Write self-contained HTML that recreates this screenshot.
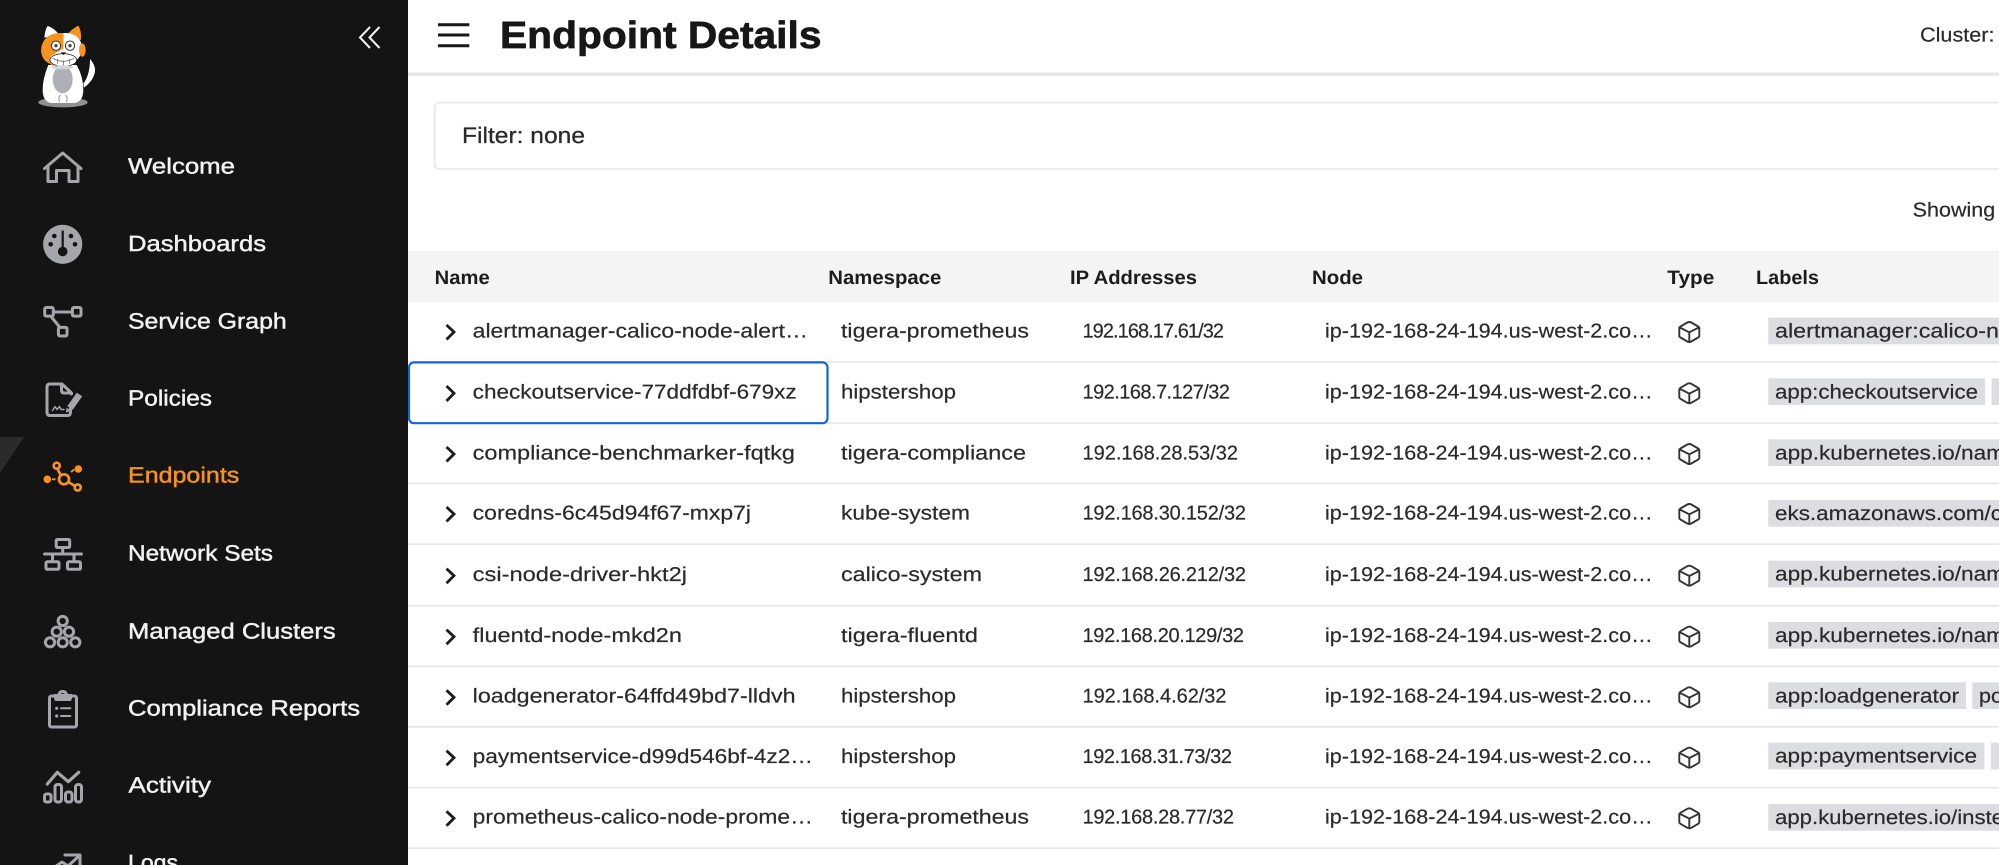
<!DOCTYPE html>
<html><head><meta charset="utf-8"><title>Endpoint Details</title>
<style>
html,body{margin:0;padding:0;background:#fff;width:1999px;height:865px;overflow:hidden}
svg{display:block;filter:blur(.35px)}
text{font-family:"Liberation Sans",sans-serif;text-rendering:geometricPrecision;white-space:pre}
.nav{font-size:22px;fill:#f2f2f2;stroke:#f2f2f2;stroke-width:.45px}
.th{font-size:19.5px;font-weight:bold;fill:#1c1c1c}
.td{font-size:20px;fill:#2a2a2a;stroke:#2a2a2a;stroke-width:.2px}
.ic{fill:none;stroke:#a4a6ab;stroke-width:3;stroke-linecap:round;stroke-linejoin:round}
.chev{fill:none;stroke:#1c1c1c;stroke-width:2.8}
.cube{fill:none;stroke:#333;stroke-width:1.9;stroke-linejoin:round}
.chip{fill:#dcdde0}
.sep{fill:#e5e5ea}
</style></head>
<body>
<svg width="1999" height="865" viewBox="0 0 1999 865" xmlns="http://www.w3.org/2000/svg">
<defs>
<path id="cb" class="cube" d="M-10-4Q-10-5-8-6L-2-9.5Q0-10.5 2-9.5L8-6Q10-5 10-4V4Q10 5 8 6L2 9.5Q0 10.5-2 9.5L-8 6Q-10 5-10 4ZM-9.5-4.5L0 0.3L9.5-4.5M0 0.3V10"/>
</defs>
<rect width="1999" height="865" fill="#fff"/>

<!-- Header -->
<rect x="408" y="72.5" width="1591" height="3.5" class="sep"/>
<g stroke="#171717" stroke-width="3"><path d="M438 24.7H469.3M438 35H469.3M438 45.7H469.3"/></g>
<text x="500" y="48" font-size="38" font-weight="bold" fill="#171717" stroke="#171717" stroke-width=".7" textLength="321.5" lengthAdjust="spacingAndGlyphs">Endpoint Details</text>
<text x="1920" y="41.7" font-size="20" fill="#2a2a2a" stroke="#2a2a2a" stroke-width=".2" textLength="74.5" lengthAdjust="spacingAndGlyphs">Cluster:</text>

<!-- Filter -->
<rect x="434.7" y="102.5" width="1700" height="66.5" rx="5" fill="#fff" stroke="#e5e5ea" stroke-width="1.6"/>
<text x="462" y="143" font-size="22.5" fill="#2a2a2a" stroke="#2a2a2a" stroke-width=".3" textLength="123" lengthAdjust="spacingAndGlyphs">Filter: none</text>
<text x="1912.7" y="216.7" font-size="20" fill="#2a2a2a" stroke="#2a2a2a" stroke-width=".2" textLength="82.5" lengthAdjust="spacingAndGlyphs">Showing</text>

<!-- Table head -->
<rect x="408" y="251" width="1591" height="51" fill="#f4f4f4"/>
<text class="th" x="434.7" y="284" textLength="55" lengthAdjust="spacingAndGlyphs">Name</text>
<text class="th" x="828.3" y="284" textLength="113" lengthAdjust="spacingAndGlyphs">Namespace</text>
<text class="th" x="1070" y="284" textLength="127" lengthAdjust="spacingAndGlyphs">IP Addresses</text>
<text class="th" x="1312" y="284" textLength="51" lengthAdjust="spacingAndGlyphs">Node</text>
<text class="th" x="1667.3" y="284" textLength="47" lengthAdjust="spacingAndGlyphs">Type</text>
<text class="th" x="1756" y="284" textLength="63" lengthAdjust="spacingAndGlyphs">Labels</text>

<!-- Row separators -->
<rect x="408" y="361" width="1591" height="1.6" class="sep"/>
<rect x="408" y="422.3" width="1591" height="1.6" class="sep"/>
<rect x="408" y="482.6" width="1591" height="1.6" class="sep"/>
<rect x="408" y="543.4" width="1591" height="1.6" class="sep"/>
<rect x="408" y="605" width="1591" height="1.6" class="sep"/>
<rect x="408" y="665.5" width="1591" height="1.6" class="sep"/>
<rect x="408" y="726" width="1591" height="1.6" class="sep"/>
<rect x="408" y="787" width="1591" height="1.6" class="sep"/>
<rect x="408" y="847.5" width="1591" height="1.6" class="sep"/>

<!-- Row 1 -->
<path class="chev" d="M446.5 325L454 332L446.5 339.5"/>
<text class="td" x="472.7" y="337.7" textLength="335.3" lengthAdjust="spacingAndGlyphs">alertmanager-calico-node-alert…</text>
<text class="td" x="841" y="337.7" textLength="188" lengthAdjust="spacingAndGlyphs">tigera-prometheus</text>
<text class="td" x="1082.5" y="337.7" textLength="141.5" lengthAdjust="spacing">192.168.17.61/32</text>
<text class="td" x="1325" y="337.7" textLength="327.7" lengthAdjust="spacingAndGlyphs">ip-192-168-24-194.us-west-2.co…</text>
<use href="#cb" transform="translate(1689.3 332)"/>
<rect class="chip" x="1768.3" y="317.7" width="240" height="26.7"/>
<text class="td" x="1775" y="337.7" textLength="224" lengthAdjust="spacingAndGlyphs">alertmanager:calico-n</text>

<!-- Row 2 -->
<path class="chev" d="M446.5 386L454 393.3L446.5 401"/>
<text class="td" x="472.7" y="398.3" textLength="324" lengthAdjust="spacingAndGlyphs">checkoutservice-77ddfdbf-679xz</text>
<text class="td" x="841" y="398.3" textLength="115" lengthAdjust="spacingAndGlyphs">hipstershop</text>
<text class="td" x="1082.5" y="398.3" textLength="147.5" lengthAdjust="spacing">192.168.7.127/32</text>
<text class="td" x="1325" y="398.3" textLength="327.7" lengthAdjust="spacingAndGlyphs">ip-192-168-24-194.us-west-2.co…</text>
<use href="#cb" transform="translate(1689.3 393.3)"/>
<rect class="chip" x="1768.3" y="378.3" width="216.7" height="26.7"/>
<rect class="chip" x="1991.7" y="378.3" width="20" height="26.7"/>
<text class="td" x="1775" y="398.3" textLength="203" lengthAdjust="spacingAndGlyphs">app:checkoutservice</text>

<!-- Focus -->
<rect x="409" y="362.4" width="418.5" height="60.8" rx="5" fill="none" stroke="#1464d8" stroke-width="2.2"/>

<!-- Row 3 -->
<path class="chev" d="M446.5 447L454 454L446.5 461.5"/>
<text class="td" x="472.7" y="459.3" textLength="322.3" lengthAdjust="spacingAndGlyphs">compliance-benchmarker-fqtkg</text>
<text class="td" x="841" y="459.3" textLength="185" lengthAdjust="spacingAndGlyphs">tigera-compliance</text>
<text class="td" x="1082.5" y="459.3" textLength="155.5" lengthAdjust="spacing">192.168.28.53/32</text>
<text class="td" x="1325" y="459.3" textLength="327.7" lengthAdjust="spacingAndGlyphs">ip-192-168-24-194.us-west-2.co…</text>
<use href="#cb" transform="translate(1689.3 454)"/>
<rect class="chip" x="1768.3" y="439.3" width="240" height="26.7"/>
<text class="td" x="1775" y="459.3" textLength="230" lengthAdjust="spacingAndGlyphs">app.kubernetes.io/nam</text>

<!-- Row 4 -->
<path class="chev" d="M446.5 507L454 514L446.5 521.5"/>
<text class="td" x="472.7" y="519.5" textLength="278.3" lengthAdjust="spacingAndGlyphs">coredns-6c45d94f67-mxp7j</text>
<text class="td" x="841" y="519.5" textLength="129" lengthAdjust="spacingAndGlyphs">kube-system</text>
<text class="td" x="1082.5" y="519.5" textLength="163.5" lengthAdjust="spacing">192.168.30.152/32</text>
<text class="td" x="1325" y="519.5" textLength="327.7" lengthAdjust="spacingAndGlyphs">ip-192-168-24-194.us-west-2.co…</text>
<use href="#cb" transform="translate(1689.3 514)"/>
<rect class="chip" x="1768.3" y="500" width="240" height="26.7"/>
<text class="td" x="1775" y="520" textLength="227" lengthAdjust="spacingAndGlyphs">eks.amazonaws.com/c</text>

<!-- Row 5 -->
<path class="chev" d="M446.5 568.7L454 575.7L446.5 583.2"/>
<text class="td" x="472.7" y="581" textLength="214.3" lengthAdjust="spacingAndGlyphs">csi-node-driver-hkt2j</text>
<text class="td" x="841" y="581" textLength="141" lengthAdjust="spacingAndGlyphs">calico-system</text>
<text class="td" x="1082.5" y="581" textLength="163.5" lengthAdjust="spacing">192.168.26.212/32</text>
<text class="td" x="1325" y="581" textLength="327.7" lengthAdjust="spacingAndGlyphs">ip-192-168-24-194.us-west-2.co…</text>
<use href="#cb" transform="translate(1689.3 575.7)"/>
<rect class="chip" x="1768.3" y="560.7" width="240" height="26.7"/>
<text class="td" x="1775" y="580.7" textLength="230" lengthAdjust="spacingAndGlyphs">app.kubernetes.io/nam</text>

<!-- Row 6 -->
<path class="chev" d="M446.5 629.7L454 636.7L446.5 644.2"/>
<text class="td" x="472.7" y="642" textLength="209.3" lengthAdjust="spacingAndGlyphs">fluentd-node-mkd2n</text>
<text class="td" x="841" y="642" textLength="137" lengthAdjust="spacingAndGlyphs">tigera-fluentd</text>
<text class="td" x="1082.5" y="642" textLength="161.5" lengthAdjust="spacing">192.168.20.129/32</text>
<text class="td" x="1325" y="642" textLength="327.7" lengthAdjust="spacingAndGlyphs">ip-192-168-24-194.us-west-2.co…</text>
<use href="#cb" transform="translate(1689.3 636.7)"/>
<rect class="chip" x="1768.3" y="622" width="240" height="26.7"/>
<text class="td" x="1775" y="642" textLength="230" lengthAdjust="spacingAndGlyphs">app.kubernetes.io/nam</text>

<!-- Row 7 -->
<path class="chev" d="M446.5 690.3L454 697.3L446.5 704.8"/>
<text class="td" x="472.7" y="702.5" textLength="322.9" lengthAdjust="spacingAndGlyphs">loadgenerator-64ffd49bd7-lldvh</text>
<text class="td" x="841" y="702.5" textLength="115" lengthAdjust="spacingAndGlyphs">hipstershop</text>
<text class="td" x="1082.5" y="702.5" textLength="144" lengthAdjust="spacing">192.168.4.62/32</text>
<text class="td" x="1325" y="702.5" textLength="327.7" lengthAdjust="spacingAndGlyphs">ip-192-168-24-194.us-west-2.co…</text>
<use href="#cb" transform="translate(1689.3 697.3)"/>
<rect class="chip" x="1768.3" y="682.3" width="197.7" height="26.7"/>
<rect class="chip" x="1972.3" y="682.3" width="40" height="26.7"/>
<text class="td" x="1775" y="702.3" textLength="184" lengthAdjust="spacingAndGlyphs">app:loadgenerator</text>
<text class="td" x="1979" y="702.3" textLength="24" lengthAdjust="spacingAndGlyphs">po</text>

<!-- Row 8 -->
<path class="chev" d="M446.5 750.7L454 757.7L446.5 765.2"/>
<text class="td" x="472.7" y="763" textLength="340.3" lengthAdjust="spacingAndGlyphs">paymentservice-d99d546bf-4z2…</text>
<text class="td" x="841" y="763" textLength="115" lengthAdjust="spacingAndGlyphs">hipstershop</text>
<text class="td" x="1082.5" y="763" textLength="149.5" lengthAdjust="spacing">192.168.31.73/32</text>
<text class="td" x="1325" y="763" textLength="327.7" lengthAdjust="spacingAndGlyphs">ip-192-168-24-194.us-west-2.co…</text>
<use href="#cb" transform="translate(1689.3 757.7)"/>
<rect class="chip" x="1768.3" y="742.7" width="216" height="26.7"/>
<rect class="chip" x="1991" y="742.7" width="20" height="26.7"/>
<text class="td" x="1775" y="762.7" textLength="202" lengthAdjust="spacingAndGlyphs">app:paymentservice</text>

<!-- Row 9 -->
<path class="chev" d="M446.5 811.3L454 818.3L446.5 825.8"/>
<text class="td" x="472.7" y="823.7" textLength="340.3" lengthAdjust="spacingAndGlyphs">prometheus-calico-node-prome…</text>
<text class="td" x="841" y="823.7" textLength="188" lengthAdjust="spacingAndGlyphs">tigera-prometheus</text>
<text class="td" x="1082.5" y="823.7" textLength="151.5" lengthAdjust="spacing">192.168.28.77/32</text>
<text class="td" x="1325" y="823.7" textLength="327.7" lengthAdjust="spacingAndGlyphs">ip-192-168-24-194.us-west-2.co…</text>
<use href="#cb" transform="translate(1689.3 818.3)"/>
<rect class="chip" x="1768.3" y="804" width="240" height="26.7"/>
<text class="td" x="1775" y="824" textLength="229" lengthAdjust="spacingAndGlyphs">app.kubernetes.io/inste</text>

<!-- Sidebar -->
<rect x="0" y="0" width="408" height="865" fill="#141414"/>
<path d="M0 437H24L0 473Z" fill="#2b2b2b"/>
<path d="M370 27L360 37.5L370 48M379.5 27L369.5 37.5L379.5 48" fill="none" stroke="#f4f4f4" stroke-width="2"/>

<!-- Cat logo -->
<g transform="translate(30 15) scale(.3333)">
  <ellipse cx="99" cy="262" rx="74" ry="15" fill="#8f9094"/>
  <path d="M180 132Q197 150 195 170Q190 198 162 218L160 206Q180 180 180 132Z" fill="#fff"/>
  <path d="M55 150Q38 190 38 225Q38 258 62 264H135Q160 258 160 225Q160 185 140 150Z" fill="#fff"/>
  <ellipse cx="98" cy="193" rx="30" ry="42" fill="#adb0b6"/>
  <path d="M88 262Q84 245 92 240M110 262Q114 245 106 240" stroke="#8f9094" stroke-width="3" fill="none"/>
  <path d="M43 68Q46 40 53 33Q72 38 88 60Z" fill="#fff"/>
  <path d="M110 60Q128 40 145 32Q155 48 153 75Z" fill="#f7931e"/>
  <path d="M100 54Q55 52 40 80Q24 112 46 138L72 155L60 125L100 100Z" fill="#f7931e"/>
  <path d="M100 54Q140 52 153 82Q160 110 145 130L120 150H70L60 125L100 100Z" fill="#fff"/>
  <ellipse cx="157" cy="105" rx="10" ry="20" fill="#f7931e"/>
  <ellipse cx="100" cy="135" rx="40" ry="19" fill="#fff" stroke="#333" stroke-width="2.5"/>
  <path d="M68 130Q100 148 132 130M82 132V146M100 136V153M118 132V146" stroke="#555" stroke-width="2" fill="none"/>
  <path d="M92 112H108L100 120Z" fill="#111"/>
  <circle cx="78" cy="92" r="14" fill="#fff" stroke="#333" stroke-width="3"/>
  <circle cx="120" cy="92" r="14" fill="#fff" stroke="#333" stroke-width="3"/>
  <circle cx="78" cy="92" r="5" fill="#444"/>
  <circle cx="120" cy="92" r="5" fill="#444"/>
  <ellipse cx="97" cy="157" rx="32" ry="6" fill="#d4d5d9"/>
</g>

<!-- Home -->
<path class="ic" d="M44.5 168.5L62.7 153L81 168.5M48 166V181.5H56.5V170.5H69V181.5H78V166"/>
<text class="nav" x="128" y="173.3" textLength="107" lengthAdjust="spacingAndGlyphs">Welcome</text>

<!-- Dashboards -->
<circle cx="62.7" cy="244.3" r="19.6" fill="#a4a6ab"/>
<path d="M62.7 230.5V250" stroke="#141414" stroke-width="2.2"/>
<circle cx="62.7" cy="251.5" r="4.8" fill="#141414"/>
<g fill="#141414"><circle cx="54.3" cy="236" r="2.3"/><circle cx="71" cy="236" r="2.3"/><circle cx="50.7" cy="244.3" r="2.3"/><circle cx="75" cy="244.3" r="2.3"/></g>
<text class="nav" x="128" y="251" textLength="138" lengthAdjust="spacingAndGlyphs">Dashboards</text>

<!-- Service Graph -->
<g class="ic"><rect x="44.7" y="307.5" width="8.6" height="8.6" rx="1.5"/><rect x="72.4" y="307.5" width="8.6" height="8.6" rx="1.5"/><rect x="58.4" y="327.4" width="8.6" height="8.6" rx="1.5"/><path d="M53.5 312H72M51 316.5L60 327.5"/></g>
<text class="nav" x="128" y="328.3" textLength="158.7" lengthAdjust="spacingAndGlyphs">Service Graph</text>

<!-- Policies -->
<g class="ic"><path d="M70.5 406V412Q70.5 415.5 67.5 415.5H50Q47 415.5 47 412.5V387Q47 384 50 384H62L71.5 393V394"/><path d="M61.5 384V390Q61.5 393 64 393H71"/><path d="M52.5 410.5L55 406.5L57 409.5L59.5 406.5L61 409.5H64" stroke-width="1.4"/></g>
<path d="M79.5 394.5L70 408" stroke="#a4a6ab" stroke-width="6.5"/>
<path d="M67 408.5L66.5 412L70 410.5Z" fill="#a4a6ab" stroke="#a4a6ab"/>
<text class="nav" x="128" y="405.7" textLength="84" lengthAdjust="spacingAndGlyphs">Policies</text>

<!-- Endpoints -->
<g fill="none" stroke="#f7931e" stroke-width="2.7"><circle cx="64" cy="479.3" r="5"/><circle cx="56.7" cy="465.7" r="3"/><circle cx="77.7" cy="487.5" r="3"/><path d="M57.7 469.5L61 475.7M69 482.5L75 486"/><path d="M71 472L74 469.5M52 479.3H55.5" stroke-width="1.8"/></g>
<g fill="#f7931e"><circle cx="78.3" cy="469" r="3.8"/><circle cx="47.3" cy="479.3" r="3.8"/></g>
<text class="nav" x="128" y="482.7" style="fill:#f7931e;stroke:#f7931e" textLength="111.3" lengthAdjust="spacingAndGlyphs">Endpoints</text>

<!-- Network Sets -->
<g class="ic" stroke-width="2.6"><rect x="56.2" y="539.5" width="13.5" height="8" rx="1.2"/><rect x="46" y="561.8" width="13" height="7.5" rx="1.2"/><rect x="67.5" y="561.8" width="13" height="7.5" rx="1.2"/><path d="M62.7 547.5V554M44.5 554H81.5M52.5 554V561.5M74 554V561.5"/></g>
<text class="nav" x="128" y="560.3" textLength="145" lengthAdjust="spacingAndGlyphs">Network Sets</text>

<!-- Managed Clusters -->
<g class="ic" stroke-width="2.6"><circle cx="62.7" cy="621" r="4.6"/><circle cx="56.7" cy="631.7" r="4.6"/><circle cx="69" cy="631.7" r="4.6"/><circle cx="50" cy="642.3" r="4.6"/><circle cx="62.7" cy="642.3" r="4.6"/><circle cx="75.3" cy="642.3" r="4.6"/></g>
<text class="nav" x="128" y="638.3" textLength="207.7" lengthAdjust="spacingAndGlyphs">Managed Clusters</text>

<!-- Compliance Reports -->
<g class="ic"><rect x="49.5" y="696" width="27" height="31" rx="2"/><path d="M56 696V699.5H70V696M59 696Q59 691.5 62.7 691.5Q66.5 691.5 66.5 696Z"/><path d="M61 708.3H70.3M61 716H70.3" stroke-width="2"/></g>
<path d="M54 694H72V699H54Z" fill="#a4a6ab"/>
<g fill="#a4a6ab"><circle cx="56.7" cy="708.3" r="1.6"/><circle cx="56.7" cy="716" r="1.6"/></g>
<text class="nav" x="128" y="715.7" textLength="232" lengthAdjust="spacingAndGlyphs">Compliance Reports</text>

<!-- Activity -->
<g class="ic" stroke-width="2.6"><rect x="44.5" y="794" width="6.5" height="8" rx="2"/><rect x="55" y="784.5" width="6.5" height="17.5" rx="2.5"/><rect x="65.5" y="792" width="6.5" height="10" rx="2.5"/><rect x="75.5" y="784.5" width="6" height="17.5" rx="2.5"/><path d="M47.3 784L57.3 772.3L68.3 781.7L78.7 772.3" stroke-width="3.2"/></g>
<text class="nav" x="128.5" y="792.7" textLength="82.5" lengthAdjust="spacingAndGlyphs">Activity</text>

<!-- Logs -->
<path class="ic" stroke-width="3.6" stroke-linecap="butt" stroke-linejoin="miter" d="M65 855H80V867M79 856L68 866L62 862L52 869"/>
<text class="nav" x="128" y="870" textLength="50" lengthAdjust="spacingAndGlyphs">Logs</text>
</svg>
</body></html>
